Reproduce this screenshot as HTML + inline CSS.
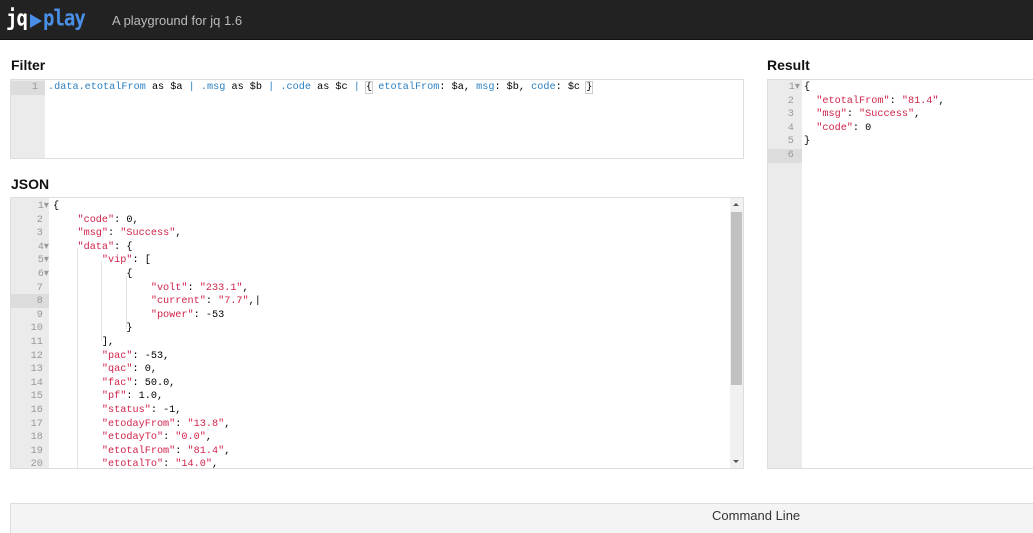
<!DOCTYPE html>
<html><head><meta charset="utf-8"><style>
*{margin:0;padding:0;box-sizing:border-box}
body{width:1033px;height:516px;overflow:hidden;background:#fff;font-family:"Liberation Sans",sans-serif;position:relative}
.hdr{position:absolute;left:0;top:0;width:1033px;height:40px;background:#222;border-bottom:1px solid #111}
.lg{position:absolute;top:6px;font-family:"DejaVu Sans Mono","Liberation Mono",monospace;font-weight:bold;font-size:19px;letter-spacing:-1px;color:#fff;transform:scaleY(1.15);transform-origin:top left}
.tri{position:absolute;left:30px;top:14px;width:0;height:0;border-left:12px solid #4a8fe7;border-top:7px solid transparent;border-bottom:7px solid transparent}
.sub{position:absolute;left:112px;top:13px;color:#bbb;font-size:13px}
h3{position:absolute;font-size:14px;font-weight:bold;color:#111}
.ed{position:absolute;border:1px solid #ddd;background:#fff;overflow:hidden}
.gut{position:absolute;left:0;top:0;bottom:0;background:#ebebeb}
.ln{position:absolute;font-family:"Liberation Mono",monospace;font-size:10.2px;line-height:13.6px;white-space:pre;color:#000}
.num{color:#999;text-align:right}
.k{color:#d0234a}.f{color:#2a7fc0}
.act{position:absolute;background:#dcdcdc}
.guide{position:absolute;width:1px;background:#e4e4e4}
</style></head><body>
<div class="hdr"><div class="lg" style="left:6px">jq</div><div class="tri"></div><div class="lg" style="left:43px;color:#4a8fe7">play</div><div class="sub">A playground for jq 1.6</div></div>

<h3 style="left:11px;top:57px">Filter</h3>
<div class="ed" style="left:10px;top:79px;width:734px;height:80px">
<div class="gut" style="width:34px"></div>
<div class="act" style="left:0;top:1px;width:34px;height:13.6px"></div>
<div class="ln num" style="left:0;top:1px;width:27px">1</div>
<div class="ln" style="left:37px;top:1px"><span class="f">.data.etotalFrom</span> as $a <span class="f">|</span> <span class="f">.msg</span> as $b <span class="f">|</span> <span class="f">.code</span> as $c <span class="f">|</span> <span style="outline:1px solid #ccc">{</span> <span class="f">etotalFrom</span>: $a, <span class="f">msg</span>: $b, <span class="f">code</span>: $c <span style="outline:1px solid #ccc">}</span></div>
</div>

<h3 style="left:11px;top:176px">JSON</h3>
<div class="ed" style="left:10px;top:197px;width:734px;height:272px">
<div class="gut" style="width:38px"></div>
<div class="act" style="left:0;top:96px;width:38px;height:13.6px"></div>
<div class="guide" style="left:66px;top:50px;height:222px"></div>
<div class="guide" style="left:90px;top:63px;height:80px"></div>
<div class="guide" style="left:115px;top:77px;height:54px"></div>
<div class="ln num" style="left:0;top:2px;width:38px">1▾
2 
3 
4▾
5▾
6▾
7 
8 
9 
10 
11 
12 
13 
14 
15 
16 
17 
18 
19 
20 </div>
<div class="ln" style="left:42px;top:2px">{
    <span class="k">"code"</span>: 0,
    <span class="k">"msg"</span>: <span class="k">"Success"</span>,
    <span class="k">"data"</span>: {
        <span class="k">"vip"</span>: [
            {
                <span class="k">"volt"</span>: <span class="k">"233.1"</span>,
                <span class="k">"current"</span>: <span class="k">"7.7"</span>,|
                <span class="k">"power"</span>: -53
            }
        ],
        <span class="k">"pac"</span>: -53,
        <span class="k">"qac"</span>: 0,
        <span class="k">"fac"</span>: 50.0,
        <span class="k">"pf"</span>: 1.0,
        <span class="k">"status"</span>: -1,
        <span class="k">"etodayFrom"</span>: <span class="k">"13.8"</span>,
        <span class="k">"etodayTo"</span>: <span class="k">"0.0"</span>,
        <span class="k">"etotalFrom"</span>: <span class="k">"81.4"</span>,
        <span class="k">"etotalTo"</span>: <span class="k">"14.0"</span>,</div>
<div style="position:absolute;left:719px;top:0;width:13px;height:270px;background:#f1f1f1"></div>
<div style="position:absolute;left:720px;top:14px;width:11px;height:173px;background:#c1c1c1"></div>
<div style="position:absolute;left:722px;top:5px;border-left:3px solid transparent;border-right:3px solid transparent;border-bottom:3px solid #555"></div>
<div style="position:absolute;left:722px;top:262px;border-left:3px solid transparent;border-right:3px solid transparent;border-top:3px solid #555"></div>
</div>

<h3 style="left:767px;top:57px">Result</h3>
<div class="ed" style="left:767px;top:79px;width:280px;height:390px">
<div class="gut" style="width:34px"></div>
<div class="act" style="left:0;top:69px;width:34px;height:13.6px"></div>
<div class="ln num" style="left:0;top:1px;width:32px">1▾
2 
3 
4 
5 
6 </div>
<div class="ln" style="left:36px;top:1px">{
  <span class="k">"etotalFrom"</span>: <span class="k">"81.4"</span>,
  <span class="k">"msg"</span>: <span class="k">"Success"</span>,
  <span class="k">"code"</span>: 0
}</div>
</div>

<div style="position:absolute;left:10px;top:503px;width:1040px;height:30px;background:#f4f4f4;border-top:1px solid #ddd;border-left:1px solid #ddd"></div>
<div style="position:absolute;left:712px;top:508px;font-size:13px;color:#333">Command Line</div>
</body></html>
